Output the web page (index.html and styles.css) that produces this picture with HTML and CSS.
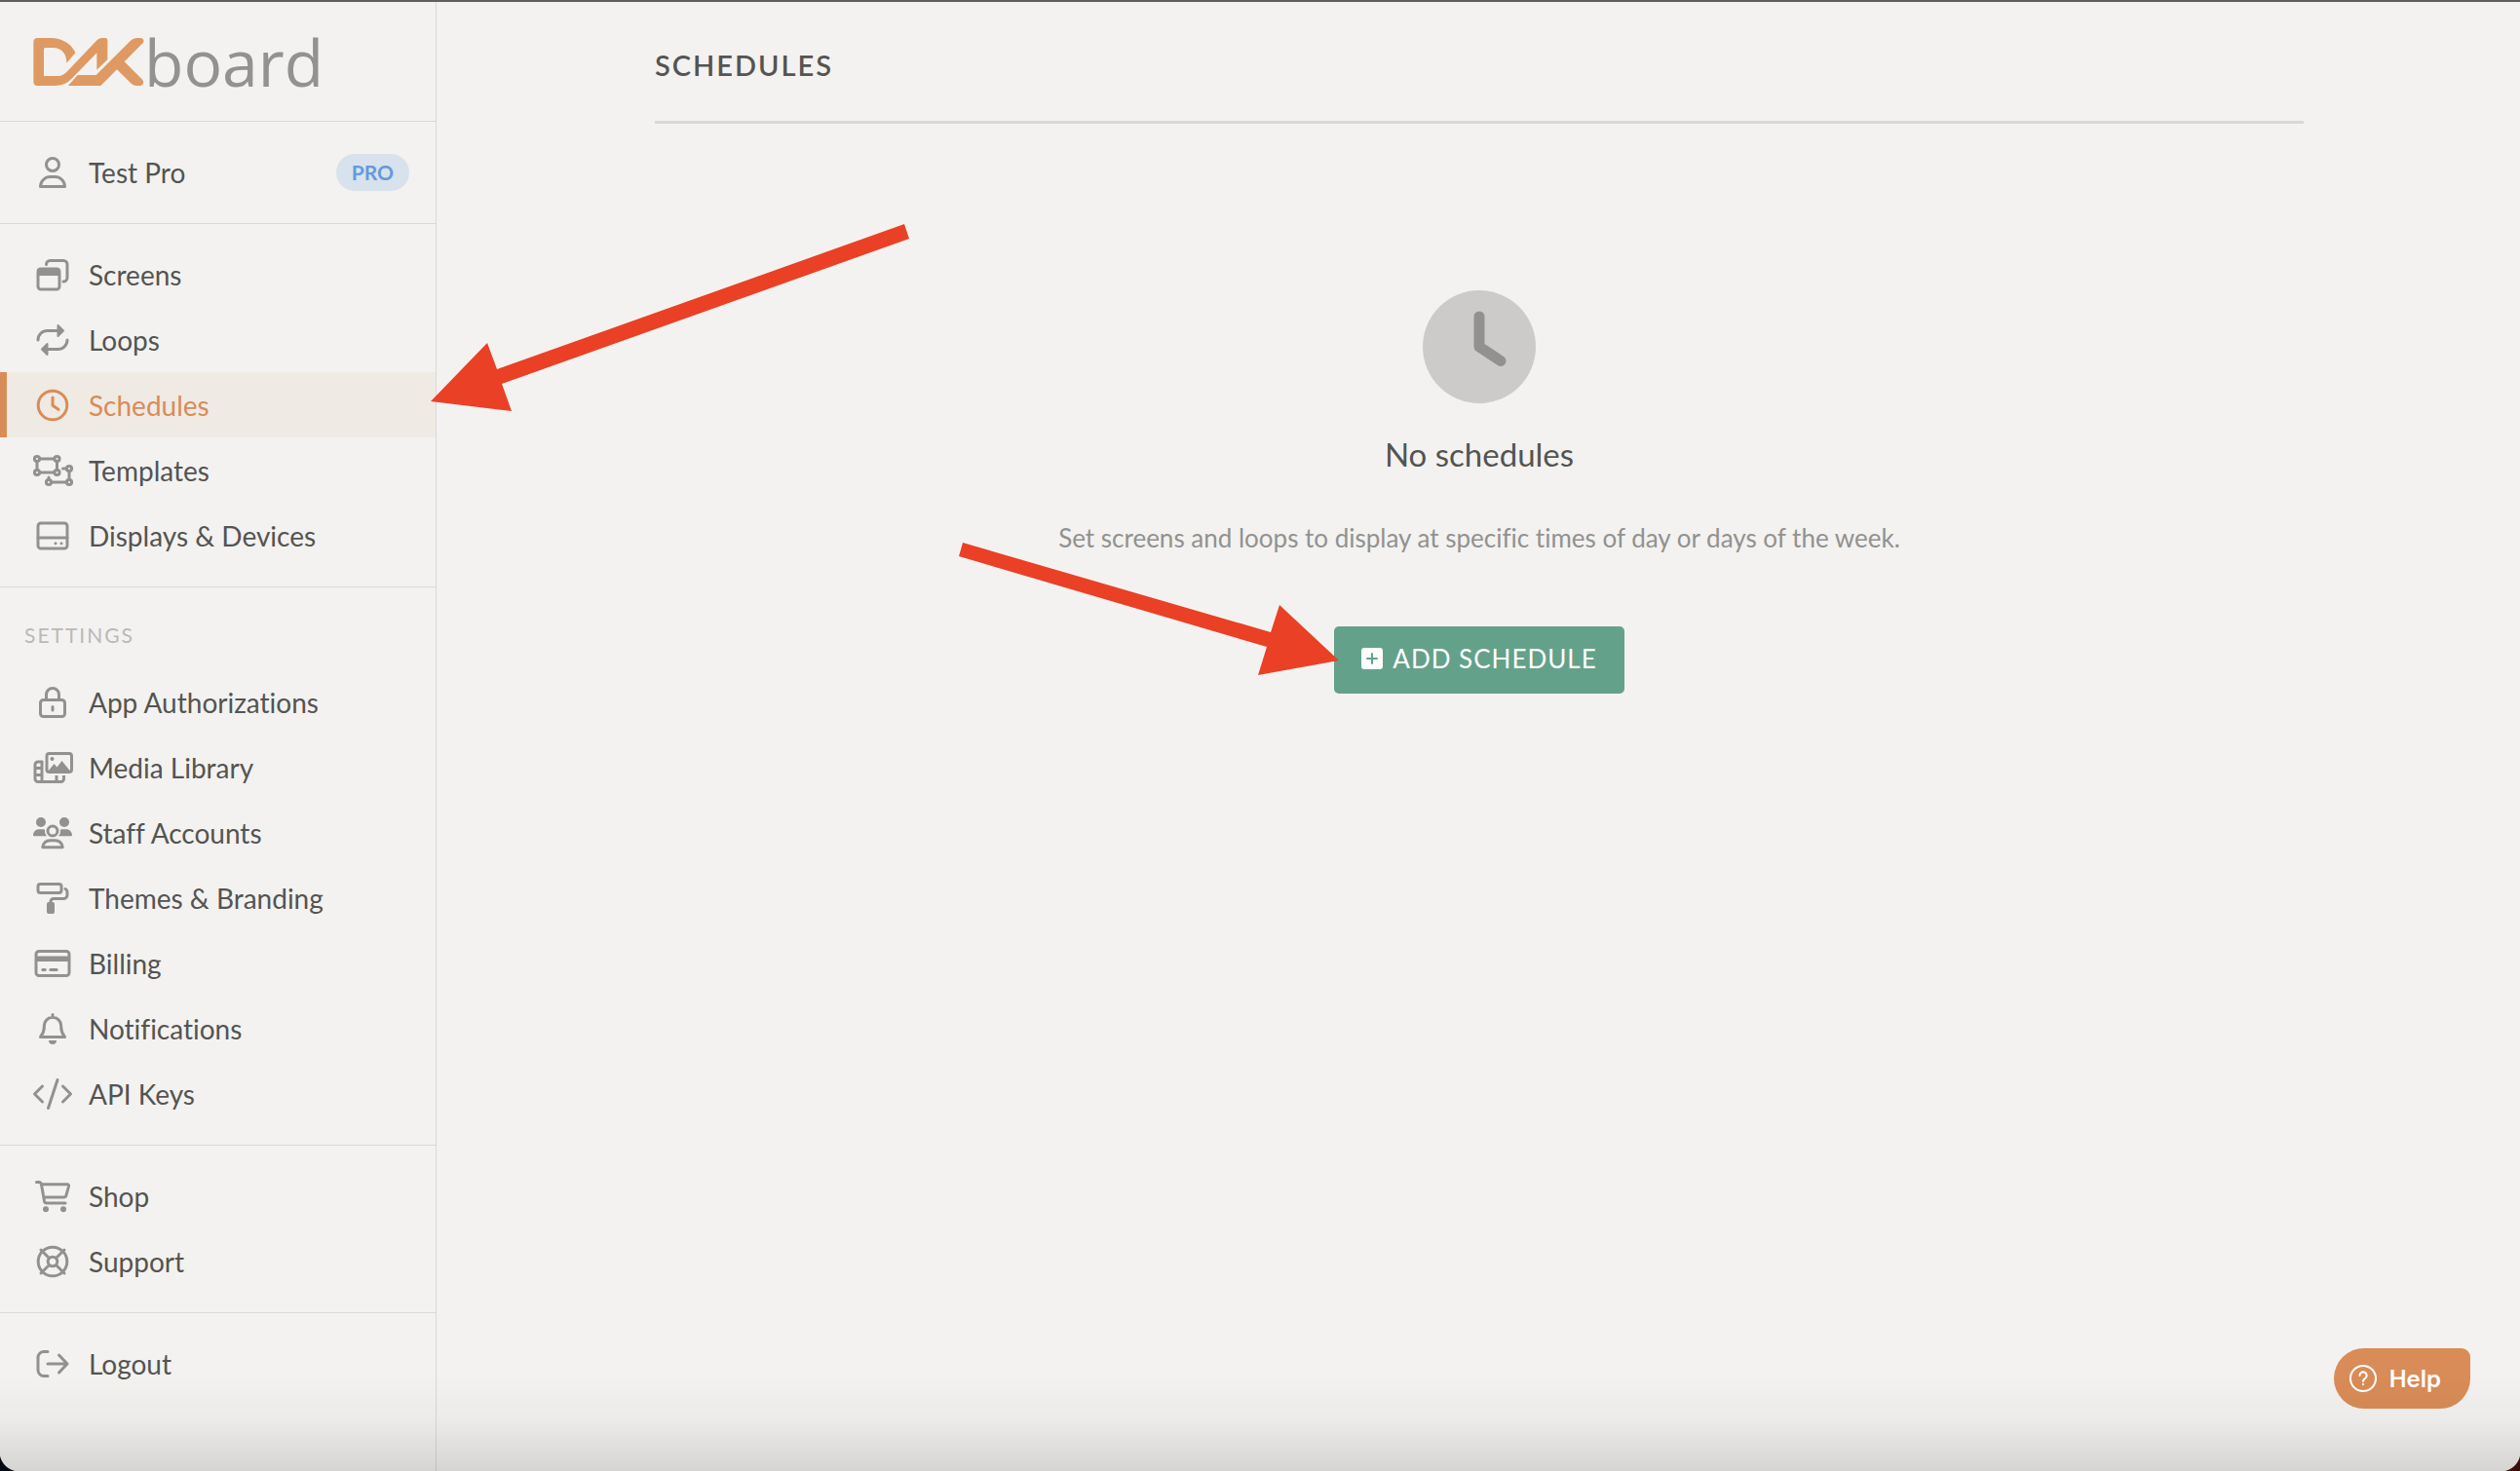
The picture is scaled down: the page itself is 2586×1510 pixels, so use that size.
FILE: index.html
```html
<!DOCTYPE html>
<html lang="en">
<head>
    <meta charset="UTF-8">
    <meta name="viewport" content="width=device-width, initial-scale=1.0">
    <title>DAKboard - Schedules</title>
    <link rel="stylesheet" href="styles.css">
</head>
<body>

<div class="page">

    <aside class="sidebar">
        <a class="logo" href="#">
            <svg class="logo-mark" viewBox="105 114 340 147" aria-label="DAK">
                <path d="M118 114H160C195 114 225 135 234 160L207 191C207 160 190 144 165 144H142Q137 144 137 149V231H180C192 231 200 226 207 219L299 122Q306 114 315 114H326Q333 114 333 121V180L300 212V160L230 232C212 252 198 261 170 261H118Q105 261 105 248V127Q105 114 118 114Z"/>
                <path d="M212 261L241 228H298L404 122Q412 114 422 114H436Q448 116 443 128L385 187L441 243Q448 255 436 261H422Q414 261 406 254L362 211L312 261Z"/>
            </svg>
            <span class="logo-text">board</span>
        </a>

        <nav class="nav-section">
            <a class="nav-item" href="#">
                <svg class="icon" viewBox="0 0 40 32"><circle cx="20" cy="8" r="6.5"/><path d="M7.5 30.5c0-5.5 4.5-10 10-10h5c5.5 0 10 4.5 10 10z"/></svg>
                Test Pro
                <span class="badge">PRO</span>
            </a>
        </nav>

        <nav class="nav-section">
            <a class="nav-item" href="#">
                <svg class="icon" viewBox="0 0 40 32"><path d="M13.5 5.5a4 4 0 0 1 4-4H31a4 4 0 0 1 4 4V19a4 4 0 0 1-4 4"/><rect x="5" y="10" width="22" height="21" rx="3"/><path class="solid" d="M4 17v-5q0-3 3-3h18q3 0 3 3v5z"/></svg>
                Screens
            </a>
            <a class="nav-item" href="#">
                <svg class="icon" viewBox="0 0 40 32"><path d="M5 16c0-5.2 4.2-9.5 9.5-9.5H25"/><path class="solid edge" d="M25.5 1v11l5.5-5.5z"/><path d="M35 16c0 5.2-4.2 9.5-9.5 9.5H15"/><path class="solid edge" d="M14.5 31V20L9 25.5z"/></svg>
                Loops
            </a>
            <a class="nav-item active" href="#">
                <svg class="icon" viewBox="0 0 40 32"><circle cx="20" cy="16" r="14.8"/><path d="M20 8v8.3l6 4"/></svg>
                Schedules
                <svg class="arrow arrow-menu" viewBox="0 0 491 192"><path d="M0 182L58 122L68 149L486 0L491 15L73 164L83 192Z"/></svg>
            </a>
            <a class="nav-item" href="#">
                <svg class="icon" viewBox="0 0 40 32"><circle cx="4" cy="4" r="2.6"/><circle cx="24.5" cy="4" r="2.6"/><circle cx="4" cy="18" r="2.6"/><circle cx="24.5" cy="18" r="2.6"/><path d="M7 4h14.5M7 18h14.5M4 7v8M24.5 7v8"/><circle cx="37" cy="14" r="2.6"/><circle cx="37" cy="28" r="2.6"/><circle cx="16" cy="28" r="2.6"/><path d="M37 17v8M19 28h15M16 25v-2M34 14h-3.5"/></svg>
                Templates
            </a>
            <a class="nav-item" href="#">
                <svg class="icon" viewBox="0 0 40 32"><rect x="5" y="3" width="30" height="26" rx="3"/><path d="M5 18h30"/><circle class="solid" cx="23" cy="23.8" r="1.5"/><circle class="solid" cx="29" cy="23.8" r="1.5"/></svg>
                Displays &amp; Devices
            </a>
        </nav>

        <nav class="nav-section">
            <h2 class="nav-heading">SETTINGS</h2>
            <a class="nav-item" href="#">
                <svg class="icon" viewBox="0 0 40 32"><rect x="7.5" y="13.5" width="25" height="17" rx="3"/><path d="M13.5 13V8a6.5 6.5 0 0 1 13 0v5M20 20.5v3.5"/></svg>
                App Authorizations
            </a>
            <a class="nav-item" href="#">
                <svg class="icon" viewBox="0 0 40 32"><rect x="14" y="1.5" width="25.5" height="19" rx="2.5"/><circle class="solid" cx="19.5" cy="7" r="2"/><path class="solid" d="M15 20l6.5-8 3 3.5 5-6.5 9 11z"/><path class="butt" d="M10 10H5a3 3 0 0 0-3 3v14.5a3 3 0 0 0 3 3h23.5a3 3 0 0 0 3-3V24M9 9v21M2 16.5h7M2 23.5h7M24 24v6"/></svg>
                Media Library
            </a>
            <a class="nav-item" href="#">
                <svg class="icon" viewBox="0 0 40 32"><circle class="solid" cx="8" cy="5" r="5"/><circle class="solid" cx="32" cy="5" r="5"/><path class="solid" d="M1 19.3q-1 0-1-1c0-3.3 2.7-6 6-6h4.5q1 0 1.5.3c-.3 2.5.3 5 2 6.7zM39 19.3q1 0 1-1c0-3.3-2.7-6-6-6h-4.5q-1 0-1.5.3c.3 2.5-.3 5-2 6.7z"/><circle cx="20" cy="14" r="5"/><path d="M9.8 30.7c.3-4 3.5-7 7.5-7h5.4c4 0 7.2 3 7.5 7z"/></svg>
                Staff Accounts
            </a>
            <a class="nav-item" href="#">
                <svg class="icon" viewBox="0 0 40 32"><rect x="5" y="1.5" width="24" height="9" rx="2.5"/><path d="M33 6.5q2 1 2 3.5v2.5a4 4 0 0 1-4 4H21a3 3 0 0 0-3 3v2"/><rect class="solid" x="14" y="20" width="8" height="12" rx="2"/></svg>
                Themes &amp; Branding
            </a>
            <a class="nav-item" href="#">
                <svg class="icon" viewBox="0 0 40 32"><rect x="3" y="3.5" width="34" height="25" rx="3"/><path class="solid" d="M3 8.5h34V14H3z"/><path d="M9.8 22.5h2.4M17.8 22.5h6.4"/></svg>
                Billing
            </a>
            <a class="nav-item" href="#">
                <svg class="icon" viewBox="0 0 40 32"><path d="M7.5 24.5c2-2.5 3.8-6 3.8-10V13a8.7 8.7 0 0 1 17.4 0v1.5c0 4 1.8 7.5 3.8 10zM20 1.5v2"/><path class="solid" d="M16 28h8a4 4 0 0 1-8 0z"/></svg>
                Notifications
            </a>
            <a class="nav-item" href="#">
                <svg class="icon" viewBox="0 0 40 32"><path d="M9.5 8L1.5 16l8 8M30.5 8l8 8-8 8M25 1.5l-9.5 29"/></svg>
                API Keys
            </a>
        </nav>

        <nav class="nav-section">
            <a class="nav-item" href="#">
                <svg class="icon" viewBox="0 0 40 32"><path d="M3.5 1.5H6q2 0 2.5 2.5l3 17q.4 2 2.5 2H33M8.5 3.8H35q2 0 1.5 2l-2.7 9.5q-.5 1.7-2.3 1.7H11"/><circle class="solid" cx="13" cy="29.3" r="3"/><circle class="solid" cx="31" cy="29.3" r="3"/></svg>
                Shop
            </a>
            <a class="nav-item" href="#">
                <svg class="icon" viewBox="0 0 40 32"><circle cx="20" cy="16" r="14.8"/><circle cx="20" cy="16" r="4.8"/><path d="M8 4l8.5 8.5M32 4l-8.5 8.5M8 28l8.5-8.5M32 28l-8.5-8.5"/></svg>
                Support
            </a>
        </nav>

        <nav class="nav-section">
            <a class="nav-item" href="#">
                <svg class="icon" viewBox="0 0 40 32"><path d="M15 3.5h-4a6 6 0 0 0-6 6v13a6 6 0 0 0 6 6h4M15 16h19.5M26.5 7l8.5 9-8.5 9"/></svg>
                Logout
            </a>
        </nav>
    </aside>

    <main class="main">
        <h1 class="page-title">SCHEDULES</h1>

        <div class="empty">
            <svg class="empty-icon" viewBox="0 0 116 116"><circle cx="58" cy="58" r="58"/><path d="M58 27v31l22 14.5"/></svg>
            <h3 class="empty-title">No schedules</h3>
            <p class="empty-text">Set screens and loops to display at specific times of day or days of the week.</p>
            <div class="add-wrap">
                <button type="button" class="btn">
                    <svg class="btn-icon" viewBox="0 0 22 22"><rect width="22" height="22" rx="3"/><path d="M11 6v10M6 11h10"/></svg>
                    ADD SCHEDULE
                </button>
                <svg class="arrow arrow-add" viewBox="0 0 390 136"><path d="M4 0L320 92L329 64L390 121L307 136L316 107L0 14Z"/></svg>
            </div>
        </div>
    </main>

</div>

<button type="button" class="help">
    <svg class="help-icon" viewBox="0 0 28 28"><circle cx="14" cy="14" r="13"/><path d="M10.5 11a3.6 3.6 0 1 1 5.5 3q-2 1.1-2 3M14 19.8v.4"/></svg>
    Help
</button>

<div class="shade"></div>
<div class="corner corner-left"></div>
<div class="corner corner-right"></div>

</body>
</html>
```
FILE: styles.css
```css
* {
    box-sizing: border-box;
}
body {
    margin: 0;
    font-family: "Lato", "Liberation Sans", sans-serif;
    font-variant-ligatures: none;
    background: #f3f2f0;
    color: #545452;
}
.page {
    display: flex;
    min-height: 100vh;
    border-top: 2px solid #5f5f5f;
}

/* sidebar */
.sidebar {
    flex: 0 0 448px;
    border-right: 1px solid #d9d8d6;
}
.logo {
    display: flex;
    align-items: center;
    height: 123px;
    padding: 0 34px;
    border-bottom: 1px solid #d9d8d6;
    text-decoration: none;
}
.logo-mark {
    width: 114px;
    height: 49px;
    fill: #de9a62;
}
.logo-text {
    color: #929290;
    font-family: "Open Sans", "Noto Sans", sans-serif;
    font-size: 66px;
    line-height: 66px;
}
.nav-section {
    padding: 18px 0 19px;
    border-bottom: 1px solid #d9d8d6;
}
.nav-section:last-child {
    border-bottom: none;
}
.nav-heading {
    height: 66px;
    margin: 0;
    padding-left: 25px;
    color: #bab9b7;
    font-size: 21px;
    font-weight: normal;
    line-height: 62px;
    letter-spacing: 2px;
}
.nav-item {
    position: relative;
    display: flex;
    align-items: center;
    gap: 17px;
    height: 67px;
    padding: 0 27px 0 34px;
    color: #545452;
    font-size: 28px;
    line-height: 40px;
    text-decoration: none;
}
.nav-item.active {
    padding-left: 27px;
    border-left: 7px solid #d98c57;
    background: #f0eae4;
    color: #d98c57;
}
.icon {
    flex: none;
    width: 40px;
    height: 32px;
    overflow: visible;
    fill: none;
    stroke: #92918f;
    stroke-width: 3;
    stroke-linecap: round;
    stroke-linejoin: round;
}
.icon .solid {
    fill: #92918f;
    stroke: none;
}
.icon .edge {
    stroke: #92918f;
    stroke-width: 2;
}
.icon .butt {
    stroke-linecap: butt;
}
.active .icon {
    stroke: #d98c57;
}
.badge {
    margin-left: auto;
    padding: 0 16px;
    border-radius: 19px;
    background: #d8e2ec;
    color: #6699dd;
    font-size: 21px;
    font-weight: bold;
    line-height: 38px;
}

/* content */
.main {
    flex: 1;
    padding: 0 222px 0 224px;
}
.page-title {
    margin: 0;
    padding: 45px 0 37px;
    border-bottom: 3px solid #d9d8d6;
    font-size: 29px;
    font-weight: 600;
    line-height: 40px;
    letter-spacing: 2px;
}
.empty {
    display: flex;
    flex-direction: column;
    align-items: center;
    padding-top: 171px;
}
.empty-icon {
    width: 116px;
    height: 116px;
    fill: #cccbc9;
}
.empty-icon path {
    fill: none;
    stroke: #92918f;
    stroke-width: 11;
    stroke-linecap: round;
    stroke-linejoin: round;
}
.empty-title {
    margin: 28px 0 42px;
    font-size: 33px;
    font-weight: normal;
    line-height: 48px;
}
.empty-text {
    margin: 0 0 71px;
    color: #92918f;
    font-size: 26px;
    line-height: 40px;
}
.add-wrap {
    position: relative;
}
.btn {
    display: flex;
    align-items: center;
    gap: 10px;
    padding: 13px 28px 16px;
    border: none;
    border-radius: 5px;
    background: #64a18b;
    color: white;
    font-family: inherit;
    font-size: 26px;
    line-height: 40px;
    letter-spacing: 1px;
    cursor: pointer;
}
.btn-icon {
    width: 22px;
    height: 22px;
    fill: white;
}
.btn-icon path {
    stroke: #64a18b;
    stroke-width: 2;
    stroke-linecap: round;
}

/* red pointers */
.arrow {
    position: absolute;
    fill: #ea4025;
    z-index: 1;
    pointer-events: none;
}
.arrow-menu {
    width: 491px;
    height: 192px;
    left: 435px;
    top: -152px;
}
.arrow-add {
    width: 390px;
    height: 136px;
    left: -385px;
    top: -86px;
}

/* help bubble */
.help {
    position: fixed;
    right: 51px;
    bottom: 64px;
    display: flex;
    align-items: center;
    gap: 13px;
    height: 62px;
    padding: 0 30px 0 16px;
    border: none;
    border-radius: 31px 9px 31px 31px;
    background: #d98c57;
    color: white;
    font-family: "Inter", sans-serif;
    font-size: 24px;
    font-weight: 600;
    cursor: pointer;
}
.help-icon {
    width: 28px;
    height: 28px;
    fill: none;
    stroke: white;
    stroke-width: 2;
    stroke-linecap: round;
}

/* window edge */
.shade {
    position: fixed;
    left: 0;
    right: 0;
    bottom: 0;
    height: 100px;
    background: linear-gradient(rgba(0, 0, 0, 0), rgba(0, 0, 0, 0.03) 50%, rgba(0, 0, 0, 0.12));
    pointer-events: none;
}
.corner {
    position: fixed;
    bottom: 0;
    width: 20px;
    height: 20px;
}
.corner-left {
    left: 0;
    background: radial-gradient(circle at 100% 0, transparent 20px, #020810 21px);
}
.corner-right {
    right: 0;
    background: radial-gradient(circle at 0 0, transparent 20px, #3a0f0a 21px);
}
```
